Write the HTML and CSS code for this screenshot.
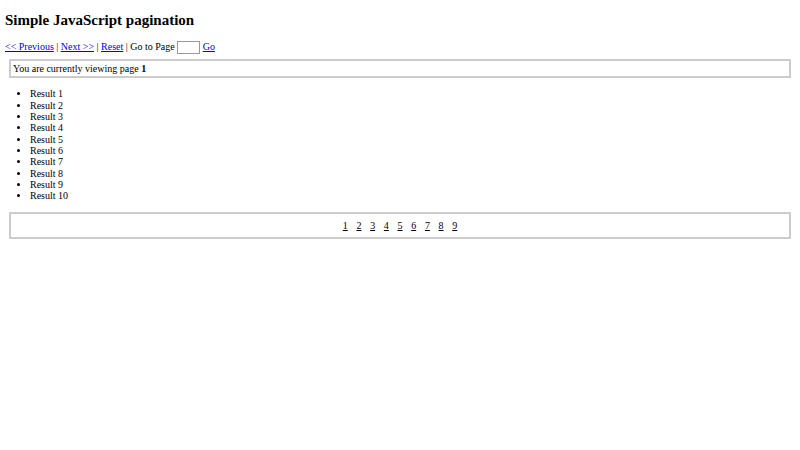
FILE: index.html
```html
<!DOCTYPE html>
<html>
<head>
<meta charset="utf-8">
<title>Simple JavaScript pagination</title>
<link rel="stylesheet" href="styles.css">
</head>
<body>
<h2 class="title">Simple JavaScript pagination</h2>
<div class="nav">
  <a href="#">&lt;&lt; Previous</a> | <a href="#">Next &gt;&gt;</a> | <a href="#">Reset</a> | Go to Page <input class="page-input" type="text"> <a href="#">Go</a>
</div>
<div class="status">You are currently viewing page <b>1</b></div>
<ul class="results">
  <li>Result 1</li>
  <li>Result 2</li>
  <li>Result 3</li>
  <li>Result 4</li>
  <li>Result 5</li>
  <li>Result 6</li>
  <li>Result 7</li>
  <li>Result 8</li>
  <li>Result 9</li>
  <li>Result 10</li>
</ul>
<div class="pager">
  <a href="#">1</a> <a href="#">2</a> <a href="#">3</a> <a href="#">4</a> <a href="#">5</a> <a href="#">6</a> <a href="#">7</a> <a href="#">8</a> <a href="#">9</a>
</div>
</body>
</html>
```
FILE: styles.css
```css
html, body {
  background: #fff;
}
body {
  margin: 0 5px;
  padding: 0;
  font-family: "Liberation Serif", "Times New Roman", serif;
  font-size: 10px;
  line-height: 11.33px;
  color: #000;
}
.title {
  font-size: 15px;
  line-height: 17px;
  font-weight: bold;
  margin: 11.5px 0 12.8px;
}
.nav {
  margin: 0;
}
.nav a {
  color: #0000ee;
}
.page-input {
  box-sizing: border-box;
  width: 23px;
  height: 13px;
  padding: 1px;
  border: 1px solid #999;
  font-size: 10px;
  vertical-align: top;
  margin: 0 0 -2px 0;
}
.status {
  margin: 6.3px 4px 0;
  border: 2px solid #ccc;
  padding: 1.9px 2px;
}
.results {
  margin: 10.3px 0;
  padding-left: 25px;
}
.pager {
  margin: 0 4px;
  border: 2px solid #ccc;
  padding: 5.8px 2px;
  text-align: center;
}
.pager a {
  color: #000;
  margin: 0 3.1px;
}
```
